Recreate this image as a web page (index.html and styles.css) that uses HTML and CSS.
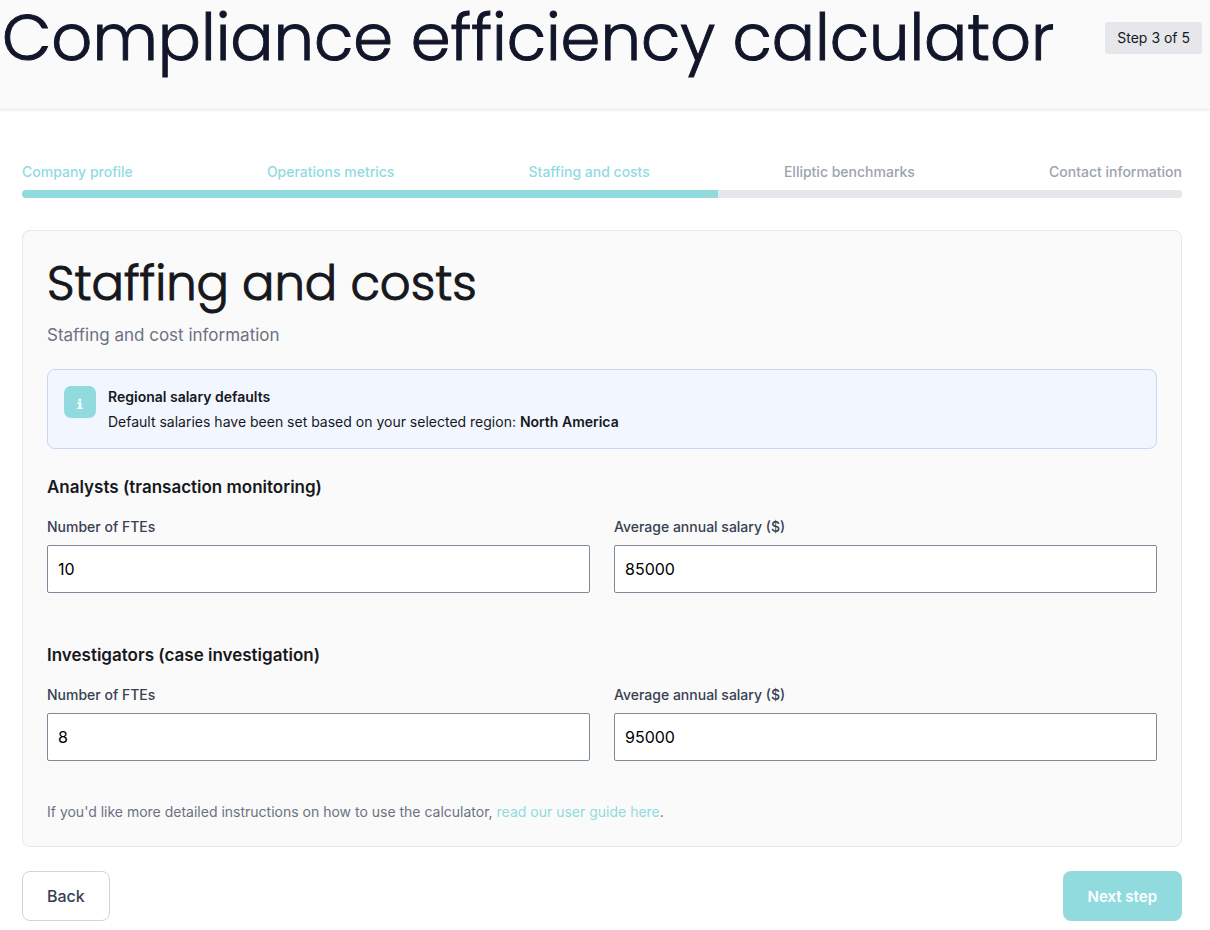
FILE: index.html
```
<!DOCTYPE html>
<html lang="en">

<head>
    <meta charset="UTF-8">
    <meta name="viewport" content="width=device-width, initial-scale=1.0">
    <title>Compliance efficiency calculator</title>
    <link rel="stylesheet" href="styles.css">
</head>

<body>
    <header class="header">
        <h1 class="title">Compliance efficiency calculator</h1>
        <span class="step-badge">Step 3 of 5</span>
    </header>

    <main class="container">
        <nav class="steps" aria-label="Progress">
            <span class="step done">Company profile</span>
            <span class="step done">Operations metrics</span>
            <span class="step done">Staffing and costs</span>
            <span class="step">Elliptic benchmarks</span>
            <span class="step">Contact information</span>
        </nav>
        <div class="progress">
            <div class="progress-fill" style="width: 60%"></div>
        </div>

        <form id="staffingForm">
            <div class="card">
                <h2 class="card-title">Staffing and costs</h2>
                <p class="subtitle">Staffing and cost information</p>

                <div class="notice">
                    <svg class="notice-icon" viewBox="0 0 32 32" aria-hidden="true">
                        <rect width="32" height="32" rx="7" fill="#91dbdf" />
                        <circle cx="15.8" cy="14" r="1.5" fill="#fff" />
                        <path d="M13.2 16.3h4.2v5.4h1.3V23h-5.5v-1.3h1.5v-4.1h-1.5z" fill="#fff" />
                    </svg>
                    <div>
                        <p class="notice-title">Regional salary defaults</p>
                        <p>Default salaries have been set based on your selected region: <strong>North America</strong></p>
                    </div>
                </div>

                <h3 class="group-title">Analysts (transaction monitoring)</h3>
                <div class="fields">
                    <div class="field">
                        <label for="analystCount">Number of FTEs</label>
                        <input type="text" inputmode="numeric" id="analystCount" value="10">
                    </div>
                    <div class="field">
                        <label for="analystSalary">Average annual salary ($)</label>
                        <input type="text" inputmode="numeric" id="analystSalary" value="85000">
                    </div>
                </div>

                <h3 class="group-title">Investigators (case investigation)</h3>
                <div class="fields">
                    <div class="field">
                        <label for="investigatorCount">Number of FTEs</label>
                        <input type="text" inputmode="numeric" id="investigatorCount" value="8">
                    </div>
                    <div class="field">
                        <label for="investigatorSalary">Average annual salary ($)</label>
                        <input type="text" inputmode="numeric" id="investigatorSalary" value="95000">
                    </div>
                </div>

                <p class="guide">If you'd like more detailed instructions on how to use the calculator, <a href="#guide">read our user guide here</a>.</p>
            </div>

            <div class="actions">
                <button type="button" class="button back-button">Back</button>
                <button type="submit" class="button next-button">Next step</button>
            </div>
        </form>
    </main>
</body>

</html>
```
FILE: styles.css
```
:root {
    --accent: #91dbdf;
    --ink: #16181d;
    --label: #374151;
    --muted: #6b7280;
    --border: #e5e7eb;
    --surface: #fafafa;
    --heading-font: Poppins, "Open Sans", sans-serif;
}

* {
    box-sizing: border-box;
}

body {
    margin: 0;
    background-color: #fff;
    color: var(--ink);
    font-family: Inter, sans-serif;
    font-size: 14px;
    line-height: 20px;
}

h1,
h2,
h3,
p {
    margin: 0;
}

/* light headings get a thin outline so they don't look too faint */
h1,
h2 {
    font-family: var(--heading-font);
    font-weight: 300;
    -webkit-text-stroke: 1px;
}

.header {
    display: flex;
    justify-content: space-between;
    align-items: center;
    padding: 0 8px 34px 2px;
    background-color: var(--surface);
    border-bottom: 1px solid #ececee;
    box-shadow: 0 1px 2px rgba(0, 0, 0, 0.05);
}

.title {
    color: #12162a;
    font-size: 64px;
    line-height: 75px;
}

.step-badge {
    padding: 6px 12px;
    background-color: var(--border);
    border-radius: 3px;
    white-space: nowrap;
}

.container {
    padding: 52px 28px 8px 22px;
}

.steps {
    display: flex;
    justify-content: space-between;
    margin-bottom: 8px;
}

.step {
    color: #9ca3af;
    font-weight: 500;
}

.done {
    color: var(--accent);
}

.progress {
    height: 8px;
    margin-bottom: 32px;
    overflow: hidden;
    background-color: var(--border);
    border-radius: 4px;
}

.progress-fill {
    height: 100%;
    background-color: var(--accent);
}

.card {
    padding: 24px;
    background-color: var(--surface);
    border: 1px solid var(--border);
    border-radius: 8px;
}

.card-title {
    margin-bottom: 10px;
    font-size: 48px;
    line-height: 58px;
}

.subtitle {
    margin-bottom: 22px;
    color: var(--muted);
    font-size: 17px;
    line-height: 24px;
}

.notice {
    display: flex;
    gap: 12px;
    margin-bottom: 24px;
    padding: 16px;
    background-color: #f2f6ff;
    border: 1px solid #c7d7f5;
    border-radius: 8px;
}

.notice-icon {
    flex: none;
    width: 32px;
    height: 32px;
}

.notice-title {
    margin-bottom: 4px;
    font-weight: 600;
    line-height: 22px;
}

.notice strong {
    font-weight: 600;
}

.group-title {
    margin-bottom: 16px;
    font-size: 17px;
    font-weight: 600;
    line-height: 28px;
}

.fields {
    display: grid;
    grid-template-columns: 1fr 1fr;
    gap: 24px;
    margin-bottom: 40px;
}

.fields + .group-title {
    margin-top: 48px;
}

label {
    display: block;
    margin-bottom: 8px;
    color: var(--label);
    font-weight: 500;
}

input {
    width: 100%;
    height: 48px;
    padding: 0 10px;
    background-color: #fff;
    border: 1px solid #7b8b99;
    border-radius: 2px;
    color: #000;
    font-family: inherit;
    font-size: 16px;
}

.guide {
    color: var(--muted);
    line-height: 21px;
}

.guide a {
    color: var(--accent);
    text-decoration: none;
}

.actions {
    display: flex;
    justify-content: space-between;
    margin-top: 24px;
}

.button {
    height: 50px;
    padding: 0 24px;
    border: 1px solid transparent;
    border-radius: 8px;
    font-family: inherit;
    font-size: 16px;
    font-weight: 500;
    cursor: pointer;
}

.back-button {
    background-color: #fff;
    border-color: #d1d5db;
    color: var(--label);
}

.next-button {
    background-color: var(--accent);
    color: #fff;
    font-size: 15px;
    font-weight: 600;
}
```
